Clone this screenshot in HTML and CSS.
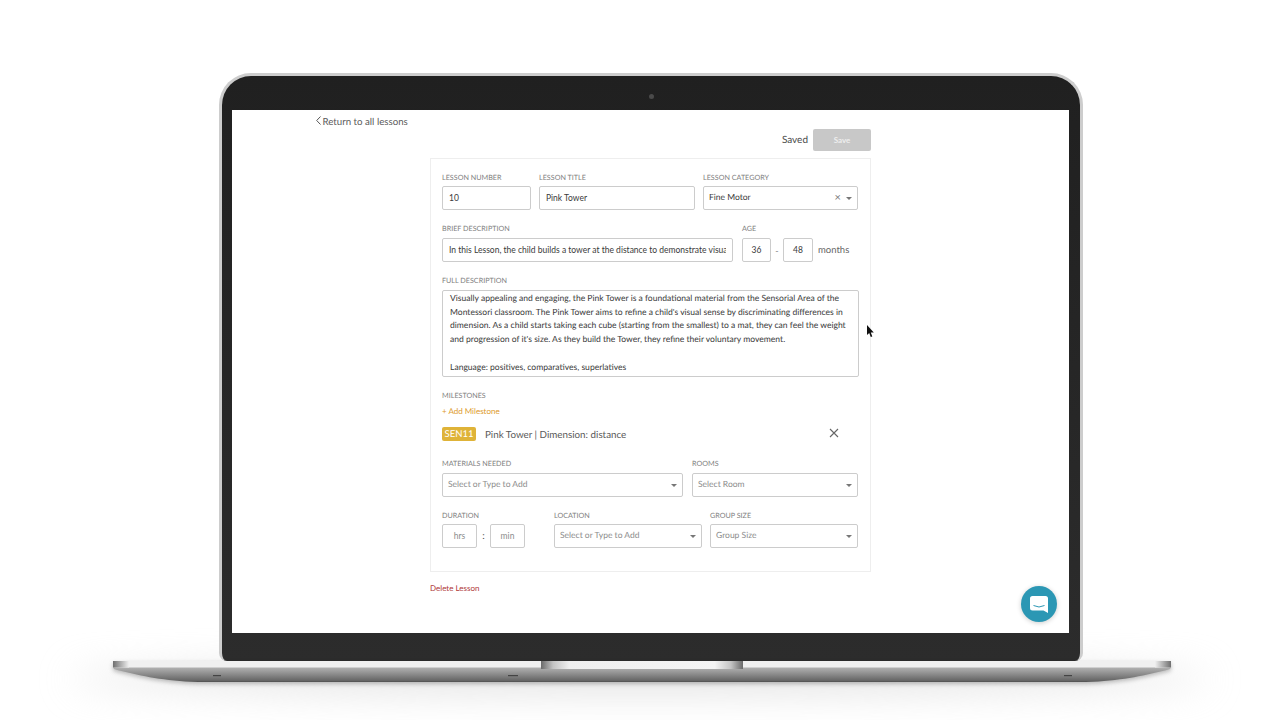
FILE: index.html
```html
<!DOCTYPE html>
<html lang="en">
<head>
    <meta charset="UTF-8">
    <title>Edit Lesson</title>
    <link rel="stylesheet" href="styles.css">
</head>
<body>
    <div class="floor-shadow"></div>

    <div class="lid">
        <div class="camera"></div>
        <main class="screen">
            <a class="back-link" href="#">
                <svg class="back-icon" width="5" height="9" viewBox="0 0 5 9"><path d="M4.5 .5 L.7 4.5 L4.5 8.5" fill="none" stroke="#555" stroke-width="1"/></svg>
                Return to all lessons
            </a>

            <div class="editor">
                <div class="save-row">
                    <span class="saved-text">Saved</span>
                    <button class="save-btn">Save</button>
                </div>

                <form class="card">
                    <div class="row snug">
                        <div class="field w-number">
                            <label>Lesson Number</label>
                            <input class="input" type="text" value="10">
                        </div>
                        <div class="field w-title">
                            <label>Lesson Title</label>
                            <input class="input" type="text" value="Pink Tower">
                        </div>
                        <div class="field w-category">
                            <label>Lesson Category</label>
                            <div class="select filled">Fine Motor<span class="clear">&times;</span><span class="caret"></span></div>
                        </div>
                    </div>

                    <div class="row">
                        <div class="field w-brief">
                            <label>Brief Description</label>
                            <input class="input" type="text" value="In this Lesson, the child builds a tower at the distance to demonstrate visual discrimination of size">
                        </div>
                        <div class="field">
                            <label>Age</label>
                            <div class="age-range">
                                <input class="input small w-age1" type="text" value="36">
                                <span class="dash">-</span>
                                <input class="input small w-age2" type="text" value="48">
                                <span class="months">months</span>
                            </div>
                        </div>
                    </div>

                    <div class="row">
                        <div class="field">
                            <label>Full Description</label>
                            <div class="textarea">
                                Visually appealing and engaging, the Pink Tower is a foundational material from the Sensorial Area of the<br>
                                Montessori classroom. The Pink Tower aims to refine a child's visual sense by discriminating differences in<br>
                                dimension. As a child starts taking each cube (starting from the smallest) to a mat, they can feel the weight<br>
                                and progression of it's size. As they build the Tower, they refine their voluntary movement.<br>
                                <br>
                                Language: positives, comparatives, superlatives
                            </div>
                        </div>
                    </div>

                    <section class="milestones">
                        <label>Milestones</label>
                        <a class="add-link" href="#">+ Add Milestone</a>
                        <div class="milestone">
                            <span class="tag">SEN11</span>
                            <span class="milestone-name">Pink Tower | Dimension: distance</span>
                            <svg class="remove" width="10" height="10" viewBox="0 0 10 10"><path d="M1 1 L9 9 M9 1 L1 9" stroke="#666" stroke-width="1.1" fill="none"/></svg>
                        </div>
                    </section>

                    <div class="row">
                        <div class="field w-materials">
                            <label>Materials Needed</label>
                            <div class="select">Select or Type to Add<span class="caret"></span></div>
                        </div>
                        <div class="field w-rooms">
                            <label>Rooms</label>
                            <div class="select">Select Room<span class="caret"></span></div>
                        </div>
                    </div>

                    <div class="row snug">
                        <div class="field w-duration">
                            <label>Duration</label>
                            <div class="duration">
                                <input class="input small w-time" type="text" placeholder="hrs">
                                <span class="colon">:</span>
                                <input class="input small w-time" type="text" placeholder="min">
                            </div>
                        </div>
                        <div class="field w-location">
                            <label>Location</label>
                            <div class="select">Select or Type to Add<span class="caret"></span></div>
                        </div>
                        <div class="field w-group">
                            <label>Group Size</label>
                            <div class="select">Group Size<span class="caret"></span></div>
                        </div>
                    </div>
                </form>

                <a class="delete-link" href="#">Delete Lesson</a>
            </div>

            <!-- chat launcher -->
            <div class="chat-btn">
                <svg width="18" height="17" viewBox="0 0 18 17">
                    <path d="M2.5 0 H15.5 Q18 0 18 2.5 V17 L13.5 14.5 H2.5 Q0 14.5 0 12 V2.5 Q0 0 2.5 0 Z" fill="#fff"/>
                    <path d="M3.5 9.5 Q9 12.5 14.5 9.5" fill="none" stroke="#2b97b4" stroke-width="1"/>
                </svg>
            </div>

            <svg class="cursor" width="8" height="13" viewBox="0 0 8 13"><path d="M0 0 L0 10 L2.2 8 L3.8 12 L5.3 11.4 L3.8 7.6 L6.8 7.4 Z" fill="#111"/></svg>
        </main>
    </div>

    <div class="base">
        <svg class="base-shape" width="1058" height="21" viewBox="0 0 1058 21">
            <defs>
                <linearGradient id="metal" x1="0" y1="0" x2="0" y2="1">
                    <stop offset="0" stop-color="#b4b4b4"/>
                    <stop offset="0.45" stop-color="#8e8e8e"/>
                    <stop offset="0.9" stop-color="#666"/>
                    <stop offset="1" stop-color="#4f4f4f"/>
                </linearGradient>
                <linearGradient id="tipLeft" x1="0" y1="0" x2="1" y2="0">
                    <stop offset="0" stop-color="#6f6f6f"/>
                    <stop offset="1" stop-color="#f0f0f0"/>
                </linearGradient>
                <linearGradient id="tipRight" x1="1" y1="0" x2="0" y2="0">
                    <stop offset="0" stop-color="#6f6f6f"/>
                    <stop offset="1" stop-color="#f0f0f0"/>
                </linearGradient>
            </defs>
            <path d="M0 6 C0 8 2 8.5 6 9.5 C30 15 50 20 85 21 H973 C1008 20 1028 15 1052 9.5 C1056 8.5 1058 8 1058 6 Z" fill="url(#metal)"/>
            <rect x="0" y="0" width="1058" height="6.5" fill="#f0f0f0"/>
            <rect x="0" y="0" width="16" height="6.5" fill="url(#tipLeft)"/>
            <rect x="1042" y="0" width="16" height="6.5" fill="url(#tipRight)"/>
            <rect x="100" y="14" width="8" height="1.2" fill="#444"/>
            <rect x="395" y="14" width="10" height="1.2" fill="#444"/>
            <rect x="951" y="14" width="8" height="1.2" fill="#444"/>
        </svg>
        <div class="notch"></div>
    </div>
</body>
</html>
```

FILE: styles.css
```css
/* General */
html, body {
    margin: 0;
    padding: 0;
    height: 720px;
    overflow: hidden;
    background-color: #fff;
    font-family: Lato, "Open Sans", sans-serif;
    color: #444;
    text-rendering: geometricPrecision;
}

a {
    text-decoration: none;
}

/* Laptop frame */
.lid {
    position: relative;
    box-sizing: border-box;
    width: 864px;
    height: 588px;
    margin: 73px 0 0 219px;
    padding: 34px 11px 0 10px;
    background-color: #242424;
    background-image: linear-gradient(#202020, #2c2c2c);
    border: 3px solid #cdcdcd;
    border-bottom: none;
    border-radius: 32px 32px 8px 8px;
}

.camera {
    position: absolute;
    top: 18px;
    left: 427px;
    width: 5px;
    height: 5px;
    border-radius: 50%;
    background-color: #4a4a4a;
}

.screen {
    position: relative;
    height: 523px;
    background-color: #fff;
}

.base {
    position: relative;
    width: 1058px;
    height: 21px;
    margin-left: 113px;
}

.base-shape {
    display: block;
    filter: drop-shadow(0 2px 2px rgba(0, 0, 0, 0.25));
}

.notch {
    position: absolute;
    top: 0;
    left: 428px;
    width: 202px;
    height: 8px;
    background-image: linear-gradient(to right, #6a6a6a, #c4c4c4 6%, #efefef 14%, #f4f4f4 86%, #c4c4c4 94%, #6a6a6a);
}

.floor-shadow {
    position: absolute;
    top: 668px;
    left: 70px;
    width: 1140px;
    height: 22px;
    border-radius: 50%;
    background-color: #d9d9d9;
    filter: blur(18px);
}

/* Back link */
.back-link {
    display: block;
    padding: 6px 0 0 84px;
    height: 13px;
    font-size: 9.7px;
    line-height: 12px;
    color: #5a5a5a;
}

.back-icon {
    margin-right: -1px;
}

/* Editor column */
.editor {
    width: 441px;
    margin-left: 198px;
}

.save-row {
    display: flex;
    justify-content: flex-end;
    align-items: center;
    gap: 5px;
    height: 22px;
    margin-bottom: 7px;
}

.saved-text {
    font-size: 10px;
    color: #4a4a4a;
}

.save-btn {
    width: 58px;
    height: 22px;
    padding: 0;
    border: none;
    border-radius: 2px;
    background-color: #c8c8c8;
    color: #eee;
    font-family: inherit;
    font-size: 8px;
    font-weight: bold;
}

/* Form card */
.card {
    box-sizing: border-box;
    height: 414px;
    padding: 13px 12px 0 11px;
    border: 1px solid #eee;
}

.row {
    display: flex;
    gap: 8px;
    margin-bottom: 13px;
}

label {
    display: block;
    height: 11px;
    margin-bottom: 4px;
    font-size: 7.2px;
    line-height: 11px;
    text-transform: uppercase;
    color: #808080;
}

.snug label {
    margin-bottom: 3px;
}

.field {
    display: flex;
    flex-direction: column;
}

.input, .select {
    box-sizing: border-box;
    height: 24px;
    border: 1px solid #ccc;
    border-radius: 2px;
    font-family: inherit;
    font-size: 8.5px;
    line-height: 21px;
    color: #3a3a3a;
    background-color: #fff;
}

.input {
    width: 100%;
    padding: 0 6px;
}

.input::placeholder {
    color: #8c8c8c;
    opacity: 1;
}

.small {
    text-align: center;
}

.select {
    position: relative;
    padding-left: 5px;
    color: #8c8c8c;
}

.select.filled {
    color: #3a3a3a;
}

.caret {
    position: absolute;
    top: 10px;
    right: 5px;
    border-style: solid;
    border-width: 3px 3px 0 3px;
    border-color: #777 transparent transparent transparent;
}

.clear {
    position: absolute;
    top: 0;
    right: 16px;
    font-size: 11px;
    color: #777;
}

.w-number { width: 89px; }
.w-title { width: 156px; }
.w-category { width: 155px; }
.w-brief { width: 291px; margin-right: 1px; }
.w-age1 { width: 29px; }
.w-age2 { width: 30px; }
.w-materials { width: 241px; margin-right: 1px; }
.w-rooms { width: 166px; }
.w-duration { width: 83px; margin-right: 21px; }
.w-location { width: 148px; }
.w-group { width: 148px; }
.w-time { width: 35px; padding: 0; }

.age-range, .duration {
    display: flex;
    align-items: center;
}

.dash {
    width: 12px;
    text-align: center;
    font-size: 9px;
    color: #777;
}

.months {
    margin-left: 5px;
    font-size: 9.5px;
    color: #666;
}

.colon {
    width: 13px;
    text-align: center;
    font-size: 10px;
    color: #555;
}

/* Full description */
.textarea {
    box-sizing: border-box;
    width: 417px;
    height: 87px;
    padding: 1px 7px;
    border: 1px solid #ccc;
    border-radius: 2px;
    font-size: 8.55px;
    line-height: 13.7px;
    color: #3a3a3a;
    white-space: nowrap;
}

/* Milestones */
.milestones {
    margin: 0 0 17px 0;
}

.add-link {
    display: block;
    height: 12px;
    margin-bottom: 10px;
    font-size: 8px;
    line-height: 12px;
    color: #dd9a2c;
}

.milestone {
    position: relative;
    display: flex;
    align-items: center;
    height: 14px;
}

.tag {
    width: 34px;
    height: 14px;
    border-radius: 2px;
    background-color: #dfb338;
    color: #fff;
    font-size: 9.5px;
    line-height: 15px;
    text-align: center;
}

.milestone-name {
    margin-left: 9px;
    padding-top: 1px;
    font-size: 9.8px;
    color: #5a5a5a;
}

.remove {
    position: absolute;
    top: 1px;
    left: 387px;
}

/* Delete link */
.delete-link {
    display: block;
    margin-top: 10px;
    font-size: 8px;
    line-height: 12px;
    color: #b03a3a;
}

/* Overlays */
.chat-btn {
    position: absolute;
    top: 476px;
    left: 789px;
    display: flex;
    align-items: center;
    justify-content: center;
    width: 36px;
    height: 36px;
    border-radius: 50%;
    background-color: #2b97b4;
    box-shadow: 0 1px 5px rgba(0, 0, 0, 0.2);
}

.cursor {
    position: absolute;
    top: 215px;
    left: 635px;
}
```
